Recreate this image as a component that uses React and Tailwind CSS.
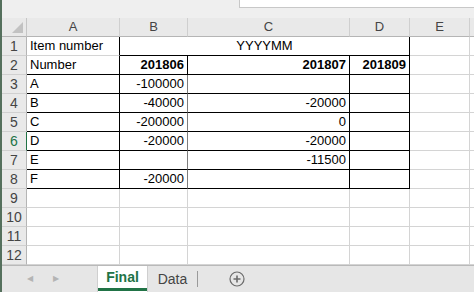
import React from 'react';

const RB = { g: 'border-r-[#d4d4d4]', k: 'border-r-black', m: 'border-r-[#7d7d7d]' };
const BB = { g: 'border-b-[#d4d4d4]', k: 'border-b-black' };

// one sheet cell, owns its right and bottom edge
const Cell = ({ t, r = 'g', b = 'g', align = 'left', bold, span }) => (
  <div
    className={`flex items-center border-r border-b px-[3px] whitespace-nowrap overflow-hidden text-[13px] text-black ${RB[r]} ${BB[b]}
      ${align === 'right' ? 'justify-end' : align === 'center' ? 'justify-center' : 'justify-start'}
      ${bold ? 'font-bold' : ''} ${span === 3 ? 'col-span-3' : ''}`}
  >
    {t}
  </div>
);

const rows = [
  [
    { t: 'Item number', r: 'k' },
    { t: 'YYYYMM', span: 3, align: 'center', r: 'k', b: 'k' },
  ],
  [
    { t: 'Number', r: 'k', b: 'k' },
    { t: '201806', align: 'right', bold: true, r: 'k', b: 'k' },
    { t: '201807', align: 'right', bold: true, r: 'k', b: 'k' },
    { t: '201809', align: 'right', bold: true, r: 'k', b: 'k' },
  ],
  ['A', '-100000', '', ''],
  ['B', '-40000', '-20000', ''],
  ['C', '-200000', '0', ''],
  ['D', '-20000', '-20000', ''],
  ['E', '', '-11500', ''],
  ['F', '-20000', '', ''],
];

const dataRow = (vals) => [
  { t: vals[0], r: 'k', b: 'k' },
  { t: vals[1], align: 'right', r: 'm', b: 'k' },
  { t: vals[2], align: 'right', r: 'k', b: 'k' },
  { t: vals[3], align: 'right', r: 'k', b: 'k' },
];

export default function App() {
  const body = rows.map((r) => (typeof r[0] === 'string' ? dataRow(r) : r));
  // empty rows 9-12
  for (let i = 0; i < 4; i++) body.push([{}, {}, {}, {}]);

  return (
    <div
      className="flex w-[474px] h-[292px] overflow-hidden bg-white"
      style={{ fontFamily: '"Liberation Sans", Arial, sans-serif' }}
    >
      <div className="w-[2px] shrink-0 bg-[#55705d]" />
      <div className="flex-1 flex flex-col min-w-0">
        {/* formula bar strip */}
        <div className="h-[18px] shrink-0 bg-[#efefef] flex">
          <div className="w-[237px]" />
          <div className="flex-1 h-[8px] bg-white border-l border-b border-[#c8c8c8]" />
        </div>

        {/* sheet grid */}
        <div className="grid grid-cols-[25px_93px_68px_162px_60px_60px_1fr] auto-rows-[19px] shrink-0">
          {/* column headers */}
          <div className="relative bg-[#e9e9e9] border-r border-b border-r-[#c6c6c6] border-b-[#b5b5b5]">
            <div className="absolute right-[3px] bottom-[3px] w-0 h-0 border-l-[11px] border-l-transparent border-b-[11px] border-b-[#c2c2c2]" />
          </div>
          {['A', 'B', 'C', 'D', 'E', ''].map((h, i) => (
            <div
              key={i}
              className="flex items-center justify-center bg-[#e9e9e9] border-r border-b border-r-[#cfcfcf] border-b-[#b5b5b5] text-[13px] text-[#444]"
            >
              {h}
            </div>
          ))}

          {body.map((cells, ri) => (
            <React.Fragment key={ri}>
              <div
                className={`flex items-center justify-center bg-[#e9e9e9] border-r border-b border-b-[#d0d0d0] text-[14px]
                  ${ri === 5 ? 'border-r-[#217346] text-[#217346]' : 'border-r-[#b5b5b5] text-[#444]'}`}
              >
                {ri + 1}
              </div>
              {cells.map((c, ci) => (
                <Cell key={ci} {...c} />
              ))}
              <Cell />
              <Cell />
            </React.Fragment>
          ))}
        </div>

        {/* sheet tabs */}
        <div className="flex-1 bg-[#e6e6e6] border-t border-[#b9b9b9] flex items-stretch text-[14px]">
          <div className="w-[95px] flex items-center pl-[25px] gap-[20px] text-[8px] text-[#b4b4b4]">
            <span>◀</span>
            <span>▶</span>
          </div>
          <div className="w-[51px] bg-white border-x border-[#cfcfcf] flex flex-col">
            <div className="flex-1 flex items-center justify-center font-bold text-[#217346]">Final</div>
            <div className="h-[3px] bg-[#217346] mb-[1px]" />
          </div>
          <div className="w-[49px] flex items-center justify-center text-[#444]">Data</div>
          <div className="w-px bg-[#9a9a9a] my-[5px]" />
          <div className="w-[78px] flex items-center justify-center">
            <svg width="16" height="16" viewBox="0 0 16 16" fill="none" stroke="#6b6b6b" strokeWidth="1.2">
              <circle cx="8" cy="8" r="7" />
              <path d="M8 4.5v7M4.5 8h7" strokeWidth="1.6" />
            </svg>
          </div>
        </div>
      </div>
    </div>
  );
}
